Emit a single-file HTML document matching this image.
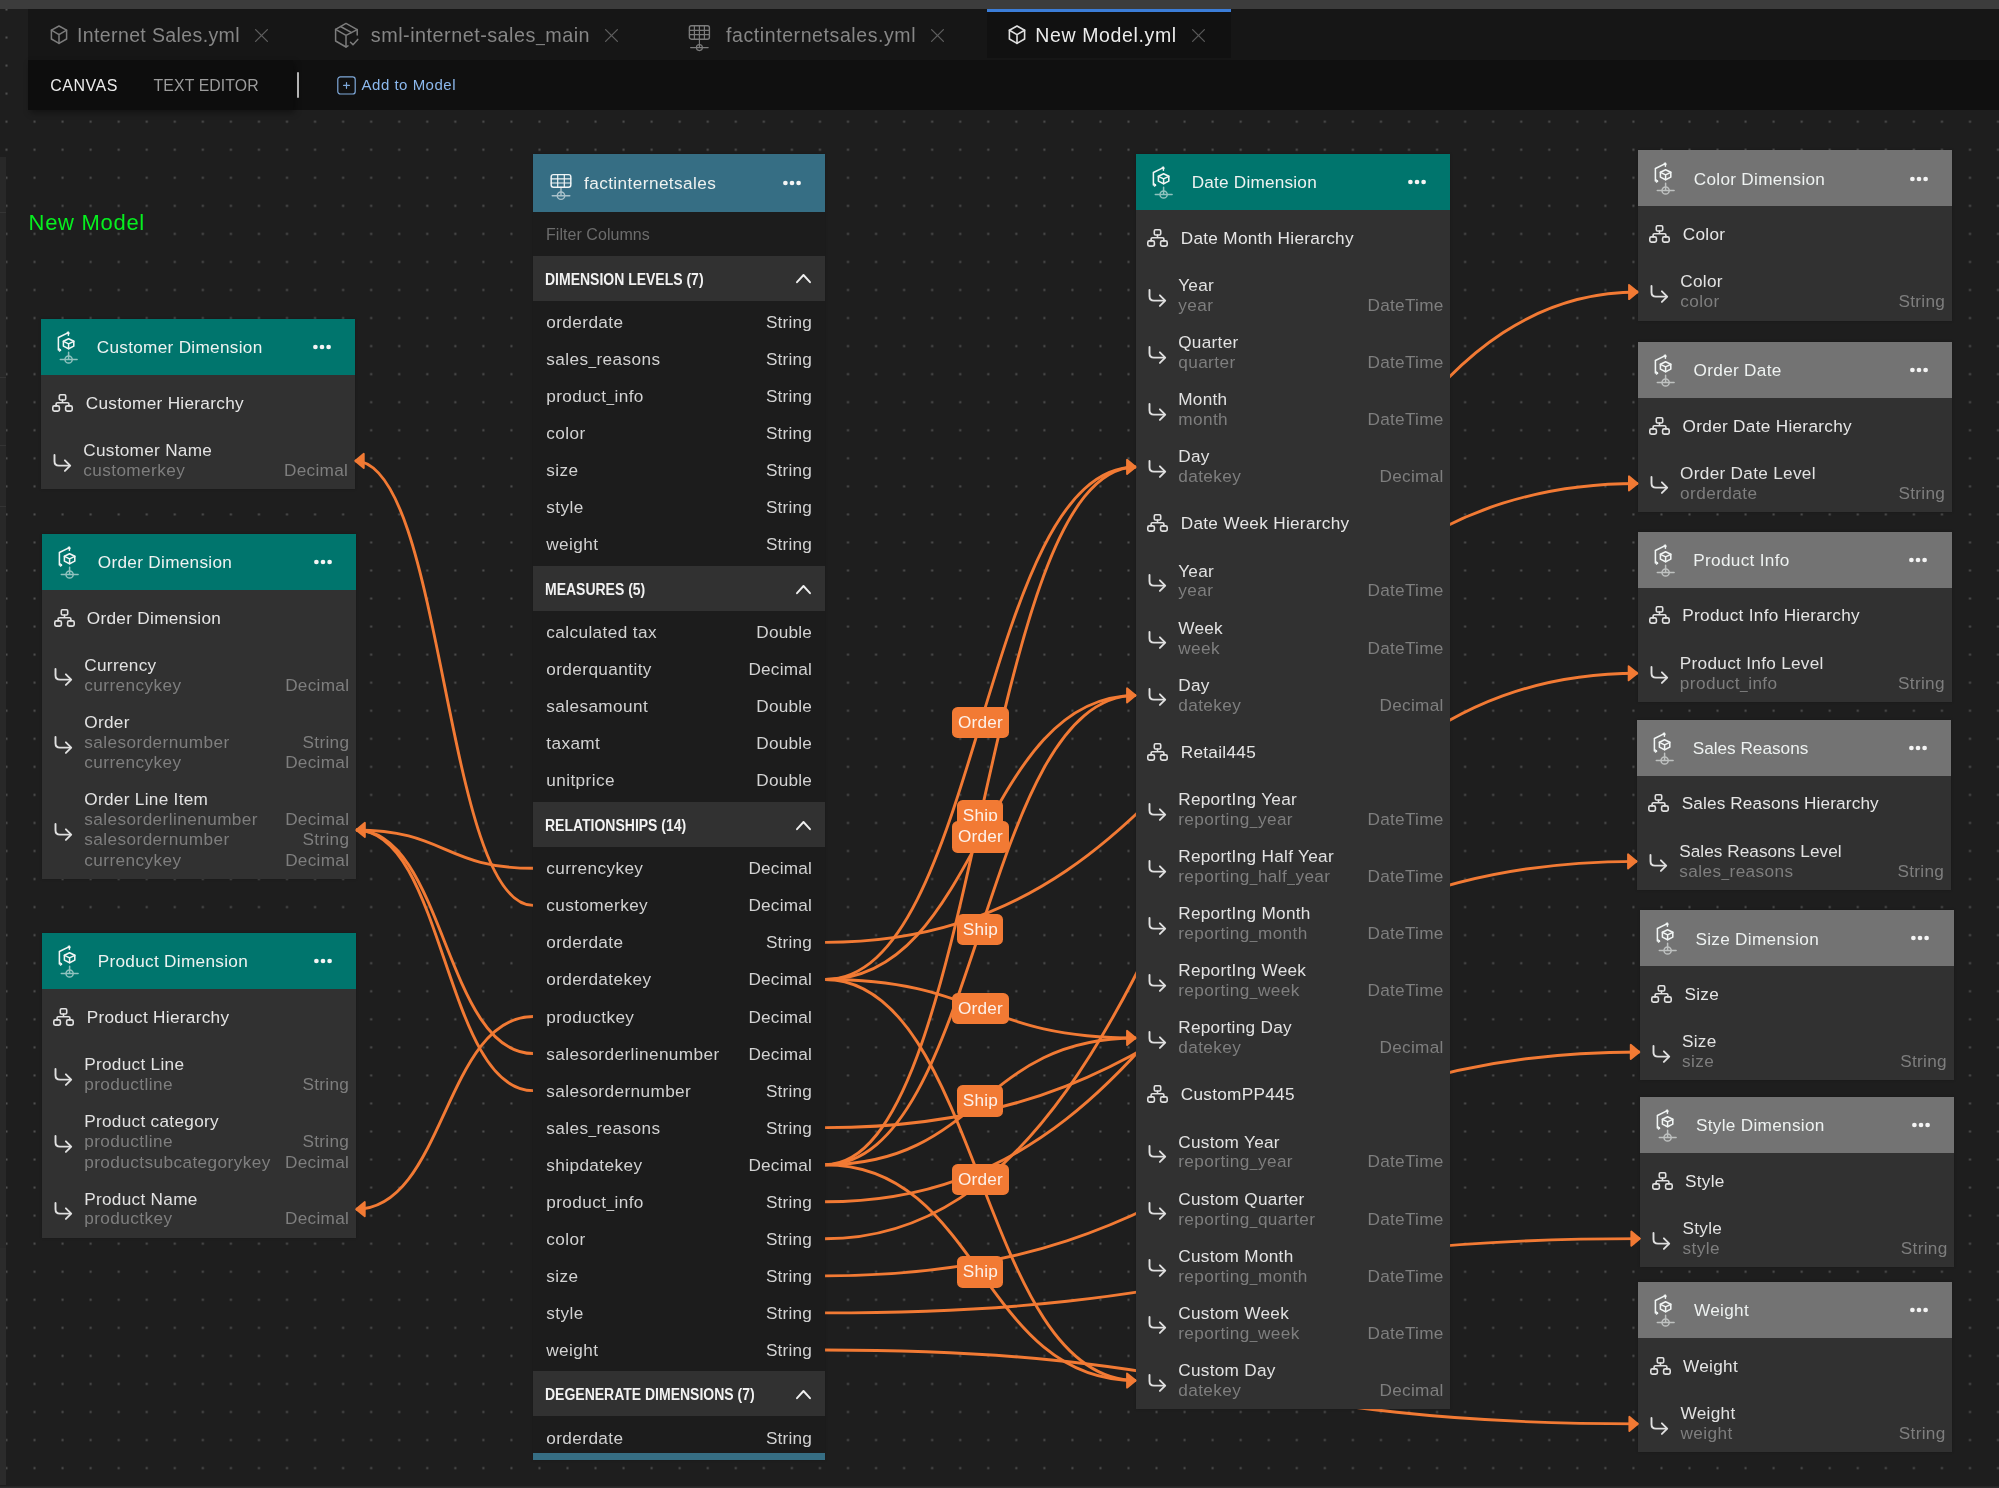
<!DOCTYPE html>
<html lang="en"><head><meta charset="utf-8"><title>New Model.yml</title>
<style>
*{box-sizing:border-box;margin:0;padding:0}
html,body{width:1999px;height:1488px;overflow:hidden;background:#1e1e1e}
body{position:relative;font-family:"Liberation Sans",sans-serif;color:#e4e4e4;-webkit-font-smoothing:antialiased}
.abs{position:absolute}
.t{position:absolute;white-space:nowrap;font-size:17.2px;line-height:20px;height:20px;letter-spacing:.3px}
.r{text-align:right}
.node{position:absolute;background:#313131;box-shadow:0 0 2.5px rgba(0,0,0,.22)}
.hd{position:absolute;left:0;top:0;width:100%;height:56.1px}
.teal{background:#00756d}
.gray{background:#737373}
.blue{background:#366e84}
.ttl{color:#eef2f1}
.hn{color:#e6e6e6}
.ln{color:#e2e2e2}
.sub{color:#7e7e7e;letter-spacing:.42px}
.ty{letter-spacing:.3px}
.u{font-size:80%}
.col{color:#d2d2d2;letter-spacing:.4px}
.cty{letter-spacing:.2px}
.sec{position:absolute;left:0;width:100%;height:45px;background:#313131}
.sec .t{font-weight:bold;font-size:15.6px;color:#f2f2f2;letter-spacing:0;transform:scaleX(.897);transform-origin:0 50%}
#root{position:absolute;left:0;top:0;width:1999px;height:1488px;overflow:hidden;will-change:transform}
svg{position:absolute;overflow:visible}
.ic{fill:none;stroke:#e4e4e4;stroke-linecap:round;stroke-linejoin:round}
</style></head>
<body>
<div id="root">
<svg class="abs" style="left:0;top:0" width="1999" height="1488">
<defs><pattern id="dots" x="-7.525" y="-4.525" width="28.05" height="28.05" patternUnits="userSpaceOnUse"><rect x="13.025" y="13.025" width="2" height="2" fill="#525252"/></pattern></defs>
<rect width="1999" height="1488" fill="url(#dots)"/>
</svg>
<div class="abs" style="left:0;top:157px;width:5.7px;height:1328px;background:#282828"></div>
<div class="abs" style="left:0;top:212px;width:5.7px;height:1.4px;background:#343434"></div>
<div class="abs" style="left:0;top:377px;width:5.7px;height:1.4px;background:#343434"></div>
<div class="abs" style="left:0;top:445px;width:5.7px;height:1.4px;background:#343434"></div>
<div class="abs" style="left:0;top:506px;width:5.7px;height:1.4px;background:#343434"></div>
<div class="abs" style="left:0;top:1248px;width:5.7px;height:237px;background:#2b2b2b"></div>
<div class="abs" style="left:0;top:1486px;width:1999px;height:2px;background:linear-gradient(#232323,#303030)"></div>
<svg class="abs" style="left:0;top:0" width="1999" height="1488"><g fill="none" stroke="#f27a34" stroke-width="2.9" stroke-linecap="butt">
<path d="M533.20 868.32 C444.60 868.32 444.60 829.95 356.00 829.95"/>
<path d="M533.20 905.37 C444.05 905.37 444.05 460.85 354.90 460.85"/>
<path d="M533.20 1016.52 C444.55 1016.52 444.55 1209.20 355.90 1209.20"/>
<path d="M533.20 1053.57 C444.60 1053.57 444.60 829.95 356.00 829.95"/>
<path d="M533.20 1090.62 C444.60 1090.62 444.60 829.95 356.00 829.95"/>
<path d="M825.00 1164.72 C980.45 1164.72 980.45 466.95 1135.90 466.95"/>
<path d="M825.00 1164.72 C980.45 1164.72 980.45 695.35 1135.90 695.35"/>
<path d="M825.00 1164.72 C980.45 1164.72 980.45 1037.95 1135.90 1037.95"/>
<path d="M825.00 1164.72 C980.45 1164.72 980.45 1380.55 1135.90 1380.55"/>
<path d="M825.00 979.47 C980.45 979.47 980.45 466.95 1135.90 466.95"/>
<path d="M825.00 979.47 C980.45 979.47 980.45 695.35 1135.90 695.35"/>
<path d="M825.00 979.47 C980.45 979.47 980.45 1037.95 1135.90 1037.95"/>
<path d="M825.00 979.47 C980.45 979.47 980.45 1380.55 1135.90 1380.55"/>
<path d="M825.00 942.42 C1231.40 942.42 1231.40 483.45 1637.80 483.45"/>
<path d="M825.00 1127.67 C1230.95 1127.67 1230.95 861.35 1636.90 861.35"/>
<path d="M825.00 1201.77 C1231.25 1201.77 1231.25 673.25 1637.50 673.25"/>
<path d="M825.00 1238.82 C1231.45 1238.82 1231.45 292.05 1637.90 292.05"/>
<path d="M825.00 1275.87 C1232.30 1275.87 1232.30 1051.95 1639.60 1051.95"/>
<path d="M825.00 1312.92 C1232.60 1312.92 1232.60 1238.65 1640.20 1238.65"/>
<path d="M825.00 1349.97 C1231.60 1349.97 1231.60 1423.85 1638.20 1423.85"/>
</g></svg>
<div class="node" style="left:40.9px;top:319.1px;width:314.0px;height:170.30px"><div class="hd teal"></div><svg style="left:0px;top:0px" width="50" height="56"><g class="ic" style="stroke:#f1f5f4" stroke-width="1.55"><path d="M19.4 31.1 L17.4 30.9 L17.4 18.5 L27.4 13.6 L27.4 16.2"/><path d="M18.4 29.9 L19.7 31.2 L18.4 32.2" stroke-width="1.2"/><path d="M26.2 13.4 L27.5 13 L28 14.4" stroke-width="1.2"/><path d="M27.6 19.7 L32.8 22.3 L32.8 27.1 L27.6 29.7 L22.4 27.1 L22.4 22.3 Z"/><path d="M22.4 22.3 L27.6 24.9 L32.8 22.3 M27.6 24.9 L27.6 29.7" stroke-width="1.5"/></g><g class="ic" style="stroke:#f1f5f4" stroke-width="1.5" opacity=".6"><path d="M27.6 33.2 L27.6 40.5 M19.3 40.5 L36.1 40.5"/><circle cx="27.6" cy="40.5" r="3.6"/></g></svg><div class="t ttl" style="top:18.40px;left:55.80px;">Customer Dimension</div><svg style="left:270.80px;top:24.30px" width="20" height="8"><circle cx="3.4000000000000004" cy="4" r="2.35" fill="#f4f4f4"/><circle cx="10" cy="4" r="2.35" fill="#f4f4f4"/><circle cx="16.6" cy="4" r="2.35" fill="#f4f4f4"/></svg><svg style="left:11.5px;top:74.9px" width="22" height="19"><g class="ic" stroke-width="1.6" style="stroke:#e2e2e2"><rect x="7.3" y=".8" width="6.4" height="5.2" rx="1.2"/><rect x=".8" y="11.9" width="6.6" height="5.2" rx="1.6"/><rect x="13.6" y="11.9" width="6.6" height="5.2" rx="1.6"/><path d="M10.5 6 L10.5 8.7 M4.1 11.9 L4.1 10 Q4.1 8.7 5.4 8.7 L15.6 8.7 Q16.9 8.7 16.9 10 L16.9 11.9"/></g></svg><div class="t hn" style="top:73.90px;left:44.80px;">Customer Hierarchy</div><svg style="left:0px;top:133.75px" width="34" height="22"><g class="ic" stroke-width="1.9" style="stroke:#e0e0e0"><path d="M13.5 2 L13.5 8.2 Q13.5 12.6 17.9 12.6 L28.6 12.6"/><path d="M23.9 7.3 L29.2 12.6 L23.9 17.9"/></g></svg><div class="t ln" style="top:121.20px;left:42.30px;">Customer Name</div><div class="t sub" style="top:141.05px;left:42.30px;">customerkey</div><div class="t sub r ty" style="top:141.05px;right:6.70px;">Decimal</div></div>
<div class="node" style="left:42.0px;top:533.7px;width:314.0px;height:344.95px"><div class="hd teal"></div><svg style="left:0px;top:0px" width="50" height="56"><g class="ic" style="stroke:#f1f5f4" stroke-width="1.55"><path d="M19.4 31.1 L17.4 30.9 L17.4 18.5 L27.4 13.6 L27.4 16.2"/><path d="M18.4 29.9 L19.7 31.2 L18.4 32.2" stroke-width="1.2"/><path d="M26.2 13.4 L27.5 13 L28 14.4" stroke-width="1.2"/><path d="M27.6 19.7 L32.8 22.3 L32.8 27.1 L27.6 29.7 L22.4 27.1 L22.4 22.3 Z"/><path d="M22.4 22.3 L27.6 24.9 L32.8 22.3 M27.6 24.9 L27.6 29.7" stroke-width="1.5"/></g><g class="ic" style="stroke:#f1f5f4" stroke-width="1.5" opacity=".6"><path d="M27.6 33.2 L27.6 40.5 M19.3 40.5 L36.1 40.5"/><circle cx="27.6" cy="40.5" r="3.6"/></g></svg><div class="t ttl" style="top:18.40px;left:55.80px;">Order Dimension</div><svg style="left:270.80px;top:24.30px" width="20" height="8"><circle cx="3.4000000000000004" cy="4" r="2.35" fill="#f4f4f4"/><circle cx="10" cy="4" r="2.35" fill="#f4f4f4"/><circle cx="16.6" cy="4" r="2.35" fill="#f4f4f4"/></svg><svg style="left:11.5px;top:74.9px" width="22" height="19"><g class="ic" stroke-width="1.6" style="stroke:#e2e2e2"><rect x="7.3" y=".8" width="6.4" height="5.2" rx="1.2"/><rect x=".8" y="11.9" width="6.6" height="5.2" rx="1.6"/><rect x="13.6" y="11.9" width="6.6" height="5.2" rx="1.6"/><path d="M10.5 6 L10.5 8.7 M4.1 11.9 L4.1 10 Q4.1 8.7 5.4 8.7 L15.6 8.7 Q16.9 8.7 16.9 10 L16.9 11.9"/></g></svg><div class="t hn" style="top:73.90px;left:44.80px;">Order Dimension</div><svg style="left:0px;top:133.75px" width="34" height="22"><g class="ic" stroke-width="1.9" style="stroke:#e0e0e0"><path d="M13.5 2 L13.5 8.2 Q13.5 12.6 17.9 12.6 L28.6 12.6"/><path d="M23.9 7.3 L29.2 12.6 L23.9 17.9"/></g></svg><div class="t ln" style="top:121.20px;left:42.30px;">Currency</div><div class="t sub" style="top:141.05px;left:42.30px;">currencykey</div><div class="t sub r ty" style="top:141.05px;right:6.70px;">Decimal</div><svg style="left:0px;top:200.925px" width="34" height="22"><g class="ic" stroke-width="1.9" style="stroke:#e0e0e0"><path d="M13.5 2 L13.5 8.2 Q13.5 12.6 17.9 12.6 L28.6 12.6"/><path d="M23.9 7.3 L29.2 12.6 L23.9 17.9"/></g></svg><div class="t ln" style="top:178.30px;left:42.30px;">Order</div><div class="t sub" style="top:198.15px;left:42.30px;">salesordernumber</div><div class="t sub r ty" style="top:198.15px;right:6.70px;">String</div><div class="t sub" style="top:218.45px;left:42.30px;">currencykey</div><div class="t sub r ty" style="top:218.45px;right:6.70px;">Decimal</div><svg style="left:0px;top:288.25px" width="34" height="22"><g class="ic" stroke-width="1.9" style="stroke:#e0e0e0"><path d="M13.5 2 L13.5 8.2 Q13.5 12.6 17.9 12.6 L28.6 12.6"/><path d="M23.9 7.3 L29.2 12.6 L23.9 17.9"/></g></svg><div class="t ln" style="top:255.55px;left:42.30px;">Order Line Item</div><div class="t sub" style="top:275.40px;left:42.30px;">salesorderlinenumber</div><div class="t sub r ty" style="top:275.40px;right:6.70px;">Decimal</div><div class="t sub" style="top:295.70px;left:42.30px;">salesordernumber</div><div class="t sub r ty" style="top:295.70px;right:6.70px;">String</div><div class="t sub" style="top:316.00px;left:42.30px;">currencykey</div><div class="t sub r ty" style="top:316.00px;right:6.70px;">Decimal</div></div>
<div class="node" style="left:41.9px;top:933.1px;width:314.0px;height:304.65px"><div class="hd teal"></div><svg style="left:0px;top:0px" width="50" height="56"><g class="ic" style="stroke:#f1f5f4" stroke-width="1.55"><path d="M19.4 31.1 L17.4 30.9 L17.4 18.5 L27.4 13.6 L27.4 16.2"/><path d="M18.4 29.9 L19.7 31.2 L18.4 32.2" stroke-width="1.2"/><path d="M26.2 13.4 L27.5 13 L28 14.4" stroke-width="1.2"/><path d="M27.6 19.7 L32.8 22.3 L32.8 27.1 L27.6 29.7 L22.4 27.1 L22.4 22.3 Z"/><path d="M22.4 22.3 L27.6 24.9 L32.8 22.3 M27.6 24.9 L27.6 29.7" stroke-width="1.5"/></g><g class="ic" style="stroke:#f1f5f4" stroke-width="1.5" opacity=".6"><path d="M27.6 33.2 L27.6 40.5 M19.3 40.5 L36.1 40.5"/><circle cx="27.6" cy="40.5" r="3.6"/></g></svg><div class="t ttl" style="top:18.40px;left:55.80px;">Product Dimension</div><svg style="left:270.80px;top:24.30px" width="20" height="8"><circle cx="3.4000000000000004" cy="4" r="2.35" fill="#f4f4f4"/><circle cx="10" cy="4" r="2.35" fill="#f4f4f4"/><circle cx="16.6" cy="4" r="2.35" fill="#f4f4f4"/></svg><svg style="left:11.5px;top:74.9px" width="22" height="19"><g class="ic" stroke-width="1.6" style="stroke:#e2e2e2"><rect x="7.3" y=".8" width="6.4" height="5.2" rx="1.2"/><rect x=".8" y="11.9" width="6.6" height="5.2" rx="1.6"/><rect x="13.6" y="11.9" width="6.6" height="5.2" rx="1.6"/><path d="M10.5 6 L10.5 8.7 M4.1 11.9 L4.1 10 Q4.1 8.7 5.4 8.7 L15.6 8.7 Q16.9 8.7 16.9 10 L16.9 11.9"/></g></svg><div class="t hn" style="top:73.90px;left:44.80px;">Product Hierarchy</div><svg style="left:0px;top:133.75px" width="34" height="22"><g class="ic" stroke-width="1.9" style="stroke:#e0e0e0"><path d="M13.5 2 L13.5 8.2 Q13.5 12.6 17.9 12.6 L28.6 12.6"/><path d="M23.9 7.3 L29.2 12.6 L23.9 17.9"/></g></svg><div class="t ln" style="top:121.20px;left:42.30px;">Product Line</div><div class="t sub" style="top:141.05px;left:42.30px;">productline</div><div class="t sub r ty" style="top:141.05px;right:6.70px;">String</div><svg style="left:0px;top:200.925px" width="34" height="22"><g class="ic" stroke-width="1.9" style="stroke:#e0e0e0"><path d="M13.5 2 L13.5 8.2 Q13.5 12.6 17.9 12.6 L28.6 12.6"/><path d="M23.9 7.3 L29.2 12.6 L23.9 17.9"/></g></svg><div class="t ln" style="top:178.30px;left:42.30px;">Product category</div><div class="t sub" style="top:198.15px;left:42.30px;">productline</div><div class="t sub r ty" style="top:198.15px;right:6.70px;">String</div><div class="t sub" style="top:218.45px;left:42.30px;">productsubcategorykey</div><div class="t sub r ty" style="top:218.45px;right:6.70px;">Decimal</div><svg style="left:0px;top:268.1px" width="34" height="22"><g class="ic" stroke-width="1.9" style="stroke:#e0e0e0"><path d="M13.5 2 L13.5 8.2 Q13.5 12.6 17.9 12.6 L28.6 12.6"/><path d="M23.9 7.3 L29.2 12.6 L23.9 17.9"/></g></svg><div class="t ln" style="top:255.55px;left:42.30px;">Product Name</div><div class="t sub" style="top:275.40px;left:42.30px;">productkey</div><div class="t sub r ty" style="top:275.40px;right:6.70px;">Decimal</div></div>
<div class="node" style="left:1135.9px;top:153.9px;width:314.5px;height:1255.20px"><div class="hd teal"></div><svg style="left:0px;top:0px" width="50" height="56"><g class="ic" style="stroke:#f1f5f4" stroke-width="1.55"><path d="M19.4 31.1 L17.4 30.9 L17.4 18.5 L27.4 13.6 L27.4 16.2"/><path d="M18.4 29.9 L19.7 31.2 L18.4 32.2" stroke-width="1.2"/><path d="M26.2 13.4 L27.5 13 L28 14.4" stroke-width="1.2"/><path d="M27.6 19.7 L32.8 22.3 L32.8 27.1 L27.6 29.7 L22.4 27.1 L22.4 22.3 Z"/><path d="M22.4 22.3 L27.6 24.9 L32.8 22.3 M27.6 24.9 L27.6 29.7" stroke-width="1.5"/></g><g class="ic" style="stroke:#f1f5f4" stroke-width="1.5" opacity=".6"><path d="M27.6 33.2 L27.6 40.5 M19.3 40.5 L36.1 40.5"/><circle cx="27.6" cy="40.5" r="3.6"/></g></svg><div class="t ttl" style="top:18.40px;left:55.80px;letter-spacing:0.21px;">Date Dimension</div><svg style="left:271.30px;top:24.30px" width="20" height="8"><circle cx="3.4000000000000004" cy="4" r="2.35" fill="#f4f4f4"/><circle cx="10" cy="4" r="2.35" fill="#f4f4f4"/><circle cx="16.6" cy="4" r="2.35" fill="#f4f4f4"/></svg><svg style="left:11.5px;top:74.9px" width="22" height="19"><g class="ic" stroke-width="1.6" style="stroke:#e2e2e2"><rect x="7.3" y=".8" width="6.4" height="5.2" rx="1.2"/><rect x=".8" y="11.9" width="6.6" height="5.2" rx="1.6"/><rect x="13.6" y="11.9" width="6.6" height="5.2" rx="1.6"/><path d="M10.5 6 L10.5 8.7 M4.1 11.9 L4.1 10 Q4.1 8.7 5.4 8.7 L15.6 8.7 Q16.9 8.7 16.9 10 L16.9 11.9"/></g></svg><div class="t hn" style="top:73.90px;left:44.80px;">Date Month Hierarchy</div><svg style="left:0px;top:133.75px" width="34" height="22"><g class="ic" stroke-width="1.9" style="stroke:#e0e0e0"><path d="M13.5 2 L13.5 8.2 Q13.5 12.6 17.9 12.6 L28.6 12.6"/><path d="M23.9 7.3 L29.2 12.6 L23.9 17.9"/></g></svg><div class="t ln" style="top:121.20px;left:42.30px;">Year</div><div class="t sub" style="top:141.05px;left:42.30px;">year</div><div class="t sub r ty" style="top:141.05px;right:6.70px;">DateTime</div><svg style="left:0px;top:190.85000000000002px" width="34" height="22"><g class="ic" stroke-width="1.9" style="stroke:#e0e0e0"><path d="M13.5 2 L13.5 8.2 Q13.5 12.6 17.9 12.6 L28.6 12.6"/><path d="M23.9 7.3 L29.2 12.6 L23.9 17.9"/></g></svg><div class="t ln" style="top:178.30px;left:42.30px;">Quarter</div><div class="t sub" style="top:198.15px;left:42.30px;">quarter</div><div class="t sub r ty" style="top:198.15px;right:6.70px;">DateTime</div><svg style="left:0px;top:247.95000000000002px" width="34" height="22"><g class="ic" stroke-width="1.9" style="stroke:#e0e0e0"><path d="M13.5 2 L13.5 8.2 Q13.5 12.6 17.9 12.6 L28.6 12.6"/><path d="M23.9 7.3 L29.2 12.6 L23.9 17.9"/></g></svg><div class="t ln" style="top:235.40px;left:42.30px;">Month</div><div class="t sub" style="top:255.25px;left:42.30px;">month</div><div class="t sub r ty" style="top:255.25px;right:6.70px;">DateTime</div><svg style="left:0px;top:305.05px" width="34" height="22"><g class="ic" stroke-width="1.9" style="stroke:#e0e0e0"><path d="M13.5 2 L13.5 8.2 Q13.5 12.6 17.9 12.6 L28.6 12.6"/><path d="M23.9 7.3 L29.2 12.6 L23.9 17.9"/></g></svg><div class="t ln" style="top:292.50px;left:42.30px;">Day</div><div class="t sub" style="top:312.35px;left:42.30px;">datekey</div><div class="t sub r ty" style="top:312.35px;right:6.70px;">Decimal</div><svg style="left:11.5px;top:360.40000000000003px" width="22" height="19"><g class="ic" stroke-width="1.6" style="stroke:#e2e2e2"><rect x="7.3" y=".8" width="6.4" height="5.2" rx="1.2"/><rect x=".8" y="11.9" width="6.6" height="5.2" rx="1.6"/><rect x="13.6" y="11.9" width="6.6" height="5.2" rx="1.6"/><path d="M10.5 6 L10.5 8.7 M4.1 11.9 L4.1 10 Q4.1 8.7 5.4 8.7 L15.6 8.7 Q16.9 8.7 16.9 10 L16.9 11.9"/></g></svg><div class="t hn" style="top:359.40px;left:44.80px;">Date Week Hierarchy</div><svg style="left:0px;top:419.25000000000006px" width="34" height="22"><g class="ic" stroke-width="1.9" style="stroke:#e0e0e0"><path d="M13.5 2 L13.5 8.2 Q13.5 12.6 17.9 12.6 L28.6 12.6"/><path d="M23.9 7.3 L29.2 12.6 L23.9 17.9"/></g></svg><div class="t ln" style="top:406.70px;left:42.30px;">Year </div><div class="t sub" style="top:426.55px;left:42.30px;">year</div><div class="t sub r ty" style="top:426.55px;right:6.70px;">DateTime</div><svg style="left:0px;top:476.3500000000001px" width="34" height="22"><g class="ic" stroke-width="1.9" style="stroke:#e0e0e0"><path d="M13.5 2 L13.5 8.2 Q13.5 12.6 17.9 12.6 L28.6 12.6"/><path d="M23.9 7.3 L29.2 12.6 L23.9 17.9"/></g></svg><div class="t ln" style="top:463.80px;left:42.30px;">Week</div><div class="t sub" style="top:483.65px;left:42.30px;">week</div><div class="t sub r ty" style="top:483.65px;right:6.70px;">DateTime</div><svg style="left:0px;top:533.45px" width="34" height="22"><g class="ic" stroke-width="1.9" style="stroke:#e0e0e0"><path d="M13.5 2 L13.5 8.2 Q13.5 12.6 17.9 12.6 L28.6 12.6"/><path d="M23.9 7.3 L29.2 12.6 L23.9 17.9"/></g></svg><div class="t ln" style="top:520.90px;left:42.30px;">Day </div><div class="t sub" style="top:540.75px;left:42.30px;">datekey</div><div class="t sub r ty" style="top:540.75px;right:6.70px;">Decimal</div><svg style="left:11.5px;top:588.8000000000001px" width="22" height="19"><g class="ic" stroke-width="1.6" style="stroke:#e2e2e2"><rect x="7.3" y=".8" width="6.4" height="5.2" rx="1.2"/><rect x=".8" y="11.9" width="6.6" height="5.2" rx="1.6"/><rect x="13.6" y="11.9" width="6.6" height="5.2" rx="1.6"/><path d="M10.5 6 L10.5 8.7 M4.1 11.9 L4.1 10 Q4.1 8.7 5.4 8.7 L15.6 8.7 Q16.9 8.7 16.9 10 L16.9 11.9"/></g></svg><div class="t hn" style="top:587.80px;left:44.80px;">Retail445</div><svg style="left:0px;top:647.6500000000001px" width="34" height="22"><g class="ic" stroke-width="1.9" style="stroke:#e0e0e0"><path d="M13.5 2 L13.5 8.2 Q13.5 12.6 17.9 12.6 L28.6 12.6"/><path d="M23.9 7.3 L29.2 12.6 L23.9 17.9"/></g></svg><div class="t ln" style="top:635.10px;left:42.30px;">ReportIng Year</div><div class="t sub" style="top:654.95px;left:42.30px;">reporting<span class="u">_</span>year</div><div class="t sub r ty" style="top:654.95px;right:6.70px;">DateTime</div><svg style="left:0px;top:704.7500000000001px" width="34" height="22"><g class="ic" stroke-width="1.9" style="stroke:#e0e0e0"><path d="M13.5 2 L13.5 8.2 Q13.5 12.6 17.9 12.6 L28.6 12.6"/><path d="M23.9 7.3 L29.2 12.6 L23.9 17.9"/></g></svg><div class="t ln" style="top:692.20px;left:42.30px;">ReportIng Half Year</div><div class="t sub" style="top:712.05px;left:42.30px;">reporting<span class="u">_</span>half<span class="u">_</span>year</div><div class="t sub r ty" style="top:712.05px;right:6.70px;">DateTime</div><svg style="left:0px;top:761.8500000000001px" width="34" height="22"><g class="ic" stroke-width="1.9" style="stroke:#e0e0e0"><path d="M13.5 2 L13.5 8.2 Q13.5 12.6 17.9 12.6 L28.6 12.6"/><path d="M23.9 7.3 L29.2 12.6 L23.9 17.9"/></g></svg><div class="t ln" style="top:749.30px;left:42.30px;">ReportIng Month</div><div class="t sub" style="top:769.15px;left:42.30px;">reporting<span class="u">_</span>month</div><div class="t sub r ty" style="top:769.15px;right:6.70px;">DateTime</div><svg style="left:0px;top:818.9500000000002px" width="34" height="22"><g class="ic" stroke-width="1.9" style="stroke:#e0e0e0"><path d="M13.5 2 L13.5 8.2 Q13.5 12.6 17.9 12.6 L28.6 12.6"/><path d="M23.9 7.3 L29.2 12.6 L23.9 17.9"/></g></svg><div class="t ln" style="top:806.40px;left:42.30px;">ReportIng Week</div><div class="t sub" style="top:826.25px;left:42.30px;">reporting<span class="u">_</span>week</div><div class="t sub r ty" style="top:826.25px;right:6.70px;">DateTime</div><svg style="left:0px;top:876.0500000000002px" width="34" height="22"><g class="ic" stroke-width="1.9" style="stroke:#e0e0e0"><path d="M13.5 2 L13.5 8.2 Q13.5 12.6 17.9 12.6 L28.6 12.6"/><path d="M23.9 7.3 L29.2 12.6 L23.9 17.9"/></g></svg><div class="t ln" style="top:863.50px;left:42.30px;">Reporting Day</div><div class="t sub" style="top:883.35px;left:42.30px;">datekey</div><div class="t sub r ty" style="top:883.35px;right:6.70px;">Decimal</div><svg style="left:11.5px;top:931.4000000000002px" width="22" height="19"><g class="ic" stroke-width="1.6" style="stroke:#e2e2e2"><rect x="7.3" y=".8" width="6.4" height="5.2" rx="1.2"/><rect x=".8" y="11.9" width="6.6" height="5.2" rx="1.6"/><rect x="13.6" y="11.9" width="6.6" height="5.2" rx="1.6"/><path d="M10.5 6 L10.5 8.7 M4.1 11.9 L4.1 10 Q4.1 8.7 5.4 8.7 L15.6 8.7 Q16.9 8.7 16.9 10 L16.9 11.9"/></g></svg><div class="t hn" style="top:930.40px;left:44.80px;">CustomPP445</div><svg style="left:0px;top:990.2500000000002px" width="34" height="22"><g class="ic" stroke-width="1.9" style="stroke:#e0e0e0"><path d="M13.5 2 L13.5 8.2 Q13.5 12.6 17.9 12.6 L28.6 12.6"/><path d="M23.9 7.3 L29.2 12.6 L23.9 17.9"/></g></svg><div class="t ln" style="top:977.70px;left:42.30px;">Custom Year</div><div class="t sub" style="top:997.55px;left:42.30px;">reporting<span class="u">_</span>year</div><div class="t sub r ty" style="top:997.55px;right:6.70px;">DateTime</div><svg style="left:0px;top:1047.3500000000001px" width="34" height="22"><g class="ic" stroke-width="1.9" style="stroke:#e0e0e0"><path d="M13.5 2 L13.5 8.2 Q13.5 12.6 17.9 12.6 L28.6 12.6"/><path d="M23.9 7.3 L29.2 12.6 L23.9 17.9"/></g></svg><div class="t ln" style="top:1034.80px;left:42.30px;">Custom Quarter</div><div class="t sub" style="top:1054.65px;left:42.30px;">reporting<span class="u">_</span>quarter</div><div class="t sub r ty" style="top:1054.65px;right:6.70px;">DateTime</div><svg style="left:0px;top:1104.45px" width="34" height="22"><g class="ic" stroke-width="1.9" style="stroke:#e0e0e0"><path d="M13.5 2 L13.5 8.2 Q13.5 12.6 17.9 12.6 L28.6 12.6"/><path d="M23.9 7.3 L29.2 12.6 L23.9 17.9"/></g></svg><div class="t ln" style="top:1091.90px;left:42.30px;">Custom Month</div><div class="t sub" style="top:1111.75px;left:42.30px;">reporting<span class="u">_</span>month</div><div class="t sub r ty" style="top:1111.75px;right:6.70px;">DateTime</div><svg style="left:0px;top:1161.55px" width="34" height="22"><g class="ic" stroke-width="1.9" style="stroke:#e0e0e0"><path d="M13.5 2 L13.5 8.2 Q13.5 12.6 17.9 12.6 L28.6 12.6"/><path d="M23.9 7.3 L29.2 12.6 L23.9 17.9"/></g></svg><div class="t ln" style="top:1149.00px;left:42.30px;">Custom Week</div><div class="t sub" style="top:1168.85px;left:42.30px;">reporting<span class="u">_</span>week</div><div class="t sub r ty" style="top:1168.85px;right:6.70px;">DateTime</div><svg style="left:0px;top:1218.6499999999999px" width="34" height="22"><g class="ic" stroke-width="1.9" style="stroke:#e0e0e0"><path d="M13.5 2 L13.5 8.2 Q13.5 12.6 17.9 12.6 L28.6 12.6"/><path d="M23.9 7.3 L29.2 12.6 L23.9 17.9"/></g></svg><div class="t ln" style="top:1206.10px;left:42.30px;">Custom Day</div><div class="t sub" style="top:1225.95px;left:42.30px;">datekey</div><div class="t sub r ty" style="top:1225.95px;right:6.70px;">Decimal</div></div>
<div class="node" style="left:1637.9px;top:150.3px;width:314.0px;height:170.30px"><div class="hd gray"></div><svg style="left:0px;top:0px" width="50" height="56"><g class="ic" style="stroke:#f1f5f4" stroke-width="1.55"><path d="M19.4 31.1 L17.4 30.9 L17.4 18.5 L27.4 13.6 L27.4 16.2"/><path d="M18.4 29.9 L19.7 31.2 L18.4 32.2" stroke-width="1.2"/><path d="M26.2 13.4 L27.5 13 L28 14.4" stroke-width="1.2"/><path d="M27.6 19.7 L32.8 22.3 L32.8 27.1 L27.6 29.7 L22.4 27.1 L22.4 22.3 Z"/><path d="M22.4 22.3 L27.6 24.9 L32.8 22.3 M27.6 24.9 L27.6 29.7" stroke-width="1.5"/></g><g class="ic" style="stroke:#f1f5f4" stroke-width="1.5" opacity=".6"><path d="M27.6 33.2 L27.6 40.5 M19.3 40.5 L36.1 40.5"/><circle cx="27.6" cy="40.5" r="3.6"/></g></svg><div class="t ttl" style="top:18.40px;left:55.80px;">Color Dimension</div><svg style="left:270.80px;top:24.30px" width="20" height="8"><circle cx="3.4000000000000004" cy="4" r="2.35" fill="#f4f4f4"/><circle cx="10" cy="4" r="2.35" fill="#f4f4f4"/><circle cx="16.6" cy="4" r="2.35" fill="#f4f4f4"/></svg><svg style="left:11.5px;top:74.9px" width="22" height="19"><g class="ic" stroke-width="1.6" style="stroke:#e2e2e2"><rect x="7.3" y=".8" width="6.4" height="5.2" rx="1.2"/><rect x=".8" y="11.9" width="6.6" height="5.2" rx="1.6"/><rect x="13.6" y="11.9" width="6.6" height="5.2" rx="1.6"/><path d="M10.5 6 L10.5 8.7 M4.1 11.9 L4.1 10 Q4.1 8.7 5.4 8.7 L15.6 8.7 Q16.9 8.7 16.9 10 L16.9 11.9"/></g></svg><div class="t hn" style="top:73.90px;left:44.80px;">Color</div><svg style="left:0px;top:133.75px" width="34" height="22"><g class="ic" stroke-width="1.9" style="stroke:#e0e0e0"><path d="M13.5 2 L13.5 8.2 Q13.5 12.6 17.9 12.6 L28.6 12.6"/><path d="M23.9 7.3 L29.2 12.6 L23.9 17.9"/></g></svg><div class="t ln" style="top:121.20px;left:42.30px;">Color</div><div class="t sub" style="top:141.05px;left:42.30px;">color</div><div class="t sub r ty" style="top:141.05px;right:6.70px;">String</div></div>
<div class="node" style="left:1637.8px;top:341.7px;width:314.0px;height:170.30px"><div class="hd gray"></div><svg style="left:0px;top:0px" width="50" height="56"><g class="ic" style="stroke:#f1f5f4" stroke-width="1.55"><path d="M19.4 31.1 L17.4 30.9 L17.4 18.5 L27.4 13.6 L27.4 16.2"/><path d="M18.4 29.9 L19.7 31.2 L18.4 32.2" stroke-width="1.2"/><path d="M26.2 13.4 L27.5 13 L28 14.4" stroke-width="1.2"/><path d="M27.6 19.7 L32.8 22.3 L32.8 27.1 L27.6 29.7 L22.4 27.1 L22.4 22.3 Z"/><path d="M22.4 22.3 L27.6 24.9 L32.8 22.3 M27.6 24.9 L27.6 29.7" stroke-width="1.5"/></g><g class="ic" style="stroke:#f1f5f4" stroke-width="1.5" opacity=".6"><path d="M27.6 33.2 L27.6 40.5 M19.3 40.5 L36.1 40.5"/><circle cx="27.6" cy="40.5" r="3.6"/></g></svg><div class="t ttl" style="top:18.40px;left:55.80px;">Order Date</div><svg style="left:270.80px;top:24.30px" width="20" height="8"><circle cx="3.4000000000000004" cy="4" r="2.35" fill="#f4f4f4"/><circle cx="10" cy="4" r="2.35" fill="#f4f4f4"/><circle cx="16.6" cy="4" r="2.35" fill="#f4f4f4"/></svg><svg style="left:11.5px;top:74.9px" width="22" height="19"><g class="ic" stroke-width="1.6" style="stroke:#e2e2e2"><rect x="7.3" y=".8" width="6.4" height="5.2" rx="1.2"/><rect x=".8" y="11.9" width="6.6" height="5.2" rx="1.6"/><rect x="13.6" y="11.9" width="6.6" height="5.2" rx="1.6"/><path d="M10.5 6 L10.5 8.7 M4.1 11.9 L4.1 10 Q4.1 8.7 5.4 8.7 L15.6 8.7 Q16.9 8.7 16.9 10 L16.9 11.9"/></g></svg><div class="t hn" style="top:73.90px;left:44.80px;">Order Date Hierarchy</div><svg style="left:0px;top:133.75px" width="34" height="22"><g class="ic" stroke-width="1.9" style="stroke:#e0e0e0"><path d="M13.5 2 L13.5 8.2 Q13.5 12.6 17.9 12.6 L28.6 12.6"/><path d="M23.9 7.3 L29.2 12.6 L23.9 17.9"/></g></svg><div class="t ln" style="top:121.20px;left:42.30px;">Order Date Level</div><div class="t sub" style="top:141.05px;left:42.30px;">orderdate</div><div class="t sub r ty" style="top:141.05px;right:6.70px;">String</div></div>
<div class="node" style="left:1637.5px;top:531.5px;width:314.0px;height:170.30px"><div class="hd gray"></div><svg style="left:0px;top:0px" width="50" height="56"><g class="ic" style="stroke:#f1f5f4" stroke-width="1.55"><path d="M19.4 31.1 L17.4 30.9 L17.4 18.5 L27.4 13.6 L27.4 16.2"/><path d="M18.4 29.9 L19.7 31.2 L18.4 32.2" stroke-width="1.2"/><path d="M26.2 13.4 L27.5 13 L28 14.4" stroke-width="1.2"/><path d="M27.6 19.7 L32.8 22.3 L32.8 27.1 L27.6 29.7 L22.4 27.1 L22.4 22.3 Z"/><path d="M22.4 22.3 L27.6 24.9 L32.8 22.3 M27.6 24.9 L27.6 29.7" stroke-width="1.5"/></g><g class="ic" style="stroke:#f1f5f4" stroke-width="1.5" opacity=".6"><path d="M27.6 33.2 L27.6 40.5 M19.3 40.5 L36.1 40.5"/><circle cx="27.6" cy="40.5" r="3.6"/></g></svg><div class="t ttl" style="top:18.40px;left:55.80px;">Product Info</div><svg style="left:270.80px;top:24.30px" width="20" height="8"><circle cx="3.4000000000000004" cy="4" r="2.35" fill="#f4f4f4"/><circle cx="10" cy="4" r="2.35" fill="#f4f4f4"/><circle cx="16.6" cy="4" r="2.35" fill="#f4f4f4"/></svg><svg style="left:11.5px;top:74.9px" width="22" height="19"><g class="ic" stroke-width="1.6" style="stroke:#e2e2e2"><rect x="7.3" y=".8" width="6.4" height="5.2" rx="1.2"/><rect x=".8" y="11.9" width="6.6" height="5.2" rx="1.6"/><rect x="13.6" y="11.9" width="6.6" height="5.2" rx="1.6"/><path d="M10.5 6 L10.5 8.7 M4.1 11.9 L4.1 10 Q4.1 8.7 5.4 8.7 L15.6 8.7 Q16.9 8.7 16.9 10 L16.9 11.9"/></g></svg><div class="t hn" style="top:73.90px;left:44.80px;">Product Info Hierarchy</div><svg style="left:0px;top:133.75px" width="34" height="22"><g class="ic" stroke-width="1.9" style="stroke:#e0e0e0"><path d="M13.5 2 L13.5 8.2 Q13.5 12.6 17.9 12.6 L28.6 12.6"/><path d="M23.9 7.3 L29.2 12.6 L23.9 17.9"/></g></svg><div class="t ln" style="top:121.20px;left:42.30px;">Product Info Level</div><div class="t sub" style="top:141.05px;left:42.30px;">product<span class="u">_</span>info</div><div class="t sub r ty" style="top:141.05px;right:6.70px;">String</div></div>
<div class="node" style="left:1636.9px;top:719.6px;width:314.0px;height:170.30px"><div class="hd gray"></div><svg style="left:0px;top:0px" width="50" height="56"><g class="ic" style="stroke:#f1f5f4" stroke-width="1.55"><path d="M19.4 31.1 L17.4 30.9 L17.4 18.5 L27.4 13.6 L27.4 16.2"/><path d="M18.4 29.9 L19.7 31.2 L18.4 32.2" stroke-width="1.2"/><path d="M26.2 13.4 L27.5 13 L28 14.4" stroke-width="1.2"/><path d="M27.6 19.7 L32.8 22.3 L32.8 27.1 L27.6 29.7 L22.4 27.1 L22.4 22.3 Z"/><path d="M22.4 22.3 L27.6 24.9 L32.8 22.3 M27.6 24.9 L27.6 29.7" stroke-width="1.5"/></g><g class="ic" style="stroke:#f1f5f4" stroke-width="1.5" opacity=".6"><path d="M27.6 33.2 L27.6 40.5 M19.3 40.5 L36.1 40.5"/><circle cx="27.6" cy="40.5" r="3.6"/></g></svg><div class="t ttl" style="top:18.40px;left:55.80px;letter-spacing:0.0px;">Sales Reasons</div><svg style="left:270.80px;top:24.30px" width="20" height="8"><circle cx="3.4000000000000004" cy="4" r="2.35" fill="#f4f4f4"/><circle cx="10" cy="4" r="2.35" fill="#f4f4f4"/><circle cx="16.6" cy="4" r="2.35" fill="#f4f4f4"/></svg><svg style="left:11.5px;top:74.9px" width="22" height="19"><g class="ic" stroke-width="1.6" style="stroke:#e2e2e2"><rect x="7.3" y=".8" width="6.4" height="5.2" rx="1.2"/><rect x=".8" y="11.9" width="6.6" height="5.2" rx="1.6"/><rect x="13.6" y="11.9" width="6.6" height="5.2" rx="1.6"/><path d="M10.5 6 L10.5 8.7 M4.1 11.9 L4.1 10 Q4.1 8.7 5.4 8.7 L15.6 8.7 Q16.9 8.7 16.9 10 L16.9 11.9"/></g></svg><div class="t hn" style="top:73.90px;left:44.80px;letter-spacing:0.14px;">Sales Reasons Hierarchy</div><svg style="left:0px;top:133.75px" width="34" height="22"><g class="ic" stroke-width="1.9" style="stroke:#e0e0e0"><path d="M13.5 2 L13.5 8.2 Q13.5 12.6 17.9 12.6 L28.6 12.6"/><path d="M23.9 7.3 L29.2 12.6 L23.9 17.9"/></g></svg><div class="t ln" style="top:121.20px;left:42.30px;letter-spacing:0.05px;">Sales Reasons Level</div><div class="t sub" style="top:141.05px;left:42.30px;">sales<span class="u">_</span>reasons</div><div class="t sub r ty" style="top:141.05px;right:6.70px;">String</div></div>
<div class="node" style="left:1639.6px;top:910.2px;width:314.0px;height:170.30px"><div class="hd gray"></div><svg style="left:0px;top:0px" width="50" height="56"><g class="ic" style="stroke:#f1f5f4" stroke-width="1.55"><path d="M19.4 31.1 L17.4 30.9 L17.4 18.5 L27.4 13.6 L27.4 16.2"/><path d="M18.4 29.9 L19.7 31.2 L18.4 32.2" stroke-width="1.2"/><path d="M26.2 13.4 L27.5 13 L28 14.4" stroke-width="1.2"/><path d="M27.6 19.7 L32.8 22.3 L32.8 27.1 L27.6 29.7 L22.4 27.1 L22.4 22.3 Z"/><path d="M22.4 22.3 L27.6 24.9 L32.8 22.3 M27.6 24.9 L27.6 29.7" stroke-width="1.5"/></g><g class="ic" style="stroke:#f1f5f4" stroke-width="1.5" opacity=".6"><path d="M27.6 33.2 L27.6 40.5 M19.3 40.5 L36.1 40.5"/><circle cx="27.6" cy="40.5" r="3.6"/></g></svg><div class="t ttl" style="top:18.40px;left:55.80px;">Size Dimension</div><svg style="left:270.80px;top:24.30px" width="20" height="8"><circle cx="3.4000000000000004" cy="4" r="2.35" fill="#f4f4f4"/><circle cx="10" cy="4" r="2.35" fill="#f4f4f4"/><circle cx="16.6" cy="4" r="2.35" fill="#f4f4f4"/></svg><svg style="left:11.5px;top:74.9px" width="22" height="19"><g class="ic" stroke-width="1.6" style="stroke:#e2e2e2"><rect x="7.3" y=".8" width="6.4" height="5.2" rx="1.2"/><rect x=".8" y="11.9" width="6.6" height="5.2" rx="1.6"/><rect x="13.6" y="11.9" width="6.6" height="5.2" rx="1.6"/><path d="M10.5 6 L10.5 8.7 M4.1 11.9 L4.1 10 Q4.1 8.7 5.4 8.7 L15.6 8.7 Q16.9 8.7 16.9 10 L16.9 11.9"/></g></svg><div class="t hn" style="top:73.90px;left:44.80px;">Size</div><svg style="left:0px;top:133.75px" width="34" height="22"><g class="ic" stroke-width="1.9" style="stroke:#e0e0e0"><path d="M13.5 2 L13.5 8.2 Q13.5 12.6 17.9 12.6 L28.6 12.6"/><path d="M23.9 7.3 L29.2 12.6 L23.9 17.9"/></g></svg><div class="t ln" style="top:121.20px;left:42.30px;">Size</div><div class="t sub" style="top:141.05px;left:42.30px;">size</div><div class="t sub r ty" style="top:141.05px;right:6.70px;">String</div></div>
<div class="node" style="left:1640.2px;top:1096.9px;width:314.0px;height:170.30px"><div class="hd gray"></div><svg style="left:0px;top:0px" width="50" height="56"><g class="ic" style="stroke:#f1f5f4" stroke-width="1.55"><path d="M19.4 31.1 L17.4 30.9 L17.4 18.5 L27.4 13.6 L27.4 16.2"/><path d="M18.4 29.9 L19.7 31.2 L18.4 32.2" stroke-width="1.2"/><path d="M26.2 13.4 L27.5 13 L28 14.4" stroke-width="1.2"/><path d="M27.6 19.7 L32.8 22.3 L32.8 27.1 L27.6 29.7 L22.4 27.1 L22.4 22.3 Z"/><path d="M22.4 22.3 L27.6 24.9 L32.8 22.3 M27.6 24.9 L27.6 29.7" stroke-width="1.5"/></g><g class="ic" style="stroke:#f1f5f4" stroke-width="1.5" opacity=".6"><path d="M27.6 33.2 L27.6 40.5 M19.3 40.5 L36.1 40.5"/><circle cx="27.6" cy="40.5" r="3.6"/></g></svg><div class="t ttl" style="top:18.40px;left:55.80px;">Style Dimension</div><svg style="left:270.80px;top:24.30px" width="20" height="8"><circle cx="3.4000000000000004" cy="4" r="2.35" fill="#f4f4f4"/><circle cx="10" cy="4" r="2.35" fill="#f4f4f4"/><circle cx="16.6" cy="4" r="2.35" fill="#f4f4f4"/></svg><svg style="left:11.5px;top:74.9px" width="22" height="19"><g class="ic" stroke-width="1.6" style="stroke:#e2e2e2"><rect x="7.3" y=".8" width="6.4" height="5.2" rx="1.2"/><rect x=".8" y="11.9" width="6.6" height="5.2" rx="1.6"/><rect x="13.6" y="11.9" width="6.6" height="5.2" rx="1.6"/><path d="M10.5 6 L10.5 8.7 M4.1 11.9 L4.1 10 Q4.1 8.7 5.4 8.7 L15.6 8.7 Q16.9 8.7 16.9 10 L16.9 11.9"/></g></svg><div class="t hn" style="top:73.90px;left:44.80px;">Style</div><svg style="left:0px;top:133.75px" width="34" height="22"><g class="ic" stroke-width="1.9" style="stroke:#e0e0e0"><path d="M13.5 2 L13.5 8.2 Q13.5 12.6 17.9 12.6 L28.6 12.6"/><path d="M23.9 7.3 L29.2 12.6 L23.9 17.9"/></g></svg><div class="t ln" style="top:121.20px;left:42.30px;">Style</div><div class="t sub" style="top:141.05px;left:42.30px;">style</div><div class="t sub r ty" style="top:141.05px;right:6.70px;">String</div></div>
<div class="node" style="left:1638.2px;top:1282.1px;width:314.0px;height:170.30px"><div class="hd gray"></div><svg style="left:0px;top:0px" width="50" height="56"><g class="ic" style="stroke:#f1f5f4" stroke-width="1.55"><path d="M19.4 31.1 L17.4 30.9 L17.4 18.5 L27.4 13.6 L27.4 16.2"/><path d="M18.4 29.9 L19.7 31.2 L18.4 32.2" stroke-width="1.2"/><path d="M26.2 13.4 L27.5 13 L28 14.4" stroke-width="1.2"/><path d="M27.6 19.7 L32.8 22.3 L32.8 27.1 L27.6 29.7 L22.4 27.1 L22.4 22.3 Z"/><path d="M22.4 22.3 L27.6 24.9 L32.8 22.3 M27.6 24.9 L27.6 29.7" stroke-width="1.5"/></g><g class="ic" style="stroke:#f1f5f4" stroke-width="1.5" opacity=".6"><path d="M27.6 33.2 L27.6 40.5 M19.3 40.5 L36.1 40.5"/><circle cx="27.6" cy="40.5" r="3.6"/></g></svg><div class="t ttl" style="top:18.40px;left:55.80px;">Weight</div><svg style="left:270.80px;top:24.30px" width="20" height="8"><circle cx="3.4000000000000004" cy="4" r="2.35" fill="#f4f4f4"/><circle cx="10" cy="4" r="2.35" fill="#f4f4f4"/><circle cx="16.6" cy="4" r="2.35" fill="#f4f4f4"/></svg><svg style="left:11.5px;top:74.9px" width="22" height="19"><g class="ic" stroke-width="1.6" style="stroke:#e2e2e2"><rect x="7.3" y=".8" width="6.4" height="5.2" rx="1.2"/><rect x=".8" y="11.9" width="6.6" height="5.2" rx="1.6"/><rect x="13.6" y="11.9" width="6.6" height="5.2" rx="1.6"/><path d="M10.5 6 L10.5 8.7 M4.1 11.9 L4.1 10 Q4.1 8.7 5.4 8.7 L15.6 8.7 Q16.9 8.7 16.9 10 L16.9 11.9"/></g></svg><div class="t hn" style="top:73.90px;left:44.80px;">Weight</div><svg style="left:0px;top:133.75px" width="34" height="22"><g class="ic" stroke-width="1.9" style="stroke:#e0e0e0"><path d="M13.5 2 L13.5 8.2 Q13.5 12.6 17.9 12.6 L28.6 12.6"/><path d="M23.9 7.3 L29.2 12.6 L23.9 17.9"/></g></svg><div class="t ln" style="top:121.20px;left:42.30px;">Weight</div><div class="t sub" style="top:141.05px;left:42.30px;">weight</div><div class="t sub r ty" style="top:141.05px;right:6.70px;">String</div></div>
<div class="node" style="left:533.2px;top:153.9px;width:291.8px;height:1305.90px;background:#1c1c1c;overflow:hidden"><div class="hd blue" style="height:58px"></div><svg style="left:0;top:0" width="50" height="58"><g class="ic" style="stroke:#f1f5f6" stroke-width="1.45"><rect x="18.2" y="20.6" width="19.6" height="12.6" rx="2.2"/><path d="M24.7 20.6 V33.2 M31.3 20.6 V33.2 M18.2 24.8 H37.8 M18.2 29 H37.8" stroke-width="1.2"/></g><g class="ic" style="stroke:#f1f5f6" stroke-width="1.4" opacity=".62"><path d="M28 33.2 V41.7 M19.2 41.7 H36.8"/><circle cx="28" cy="41.7" r="3.7"/></g></svg><div class="t ttl" style="top:19.20px;left:50.80px;letter-spacing:0.42px;">factinternetsales</div><svg style="left:248.50px;top:24.80px" width="20" height="8"><circle cx="3.4000000000000004" cy="4" r="2.35" fill="#f4f4f4"/><circle cx="10" cy="4" r="2.35" fill="#f4f4f4"/><circle cx="16.6" cy="4" r="2.35" fill="#f4f4f4"/></svg><div class="t " style="top:71.40px;left:12.80px;font-size:16px;letter-spacing:0.05px;color:#6c6c6c;">Filter Columns</div><div class="sec" style="top:101.80px"><div class="t " style="top:13.90px;left:11.50px;">DIMENSION LEVELS (7)</div><svg style="left:262.2px;top:17.8px" width="17" height="11"><path class="ic" style="stroke:#f0f0f0" stroke-width="1.9" d="M2 9.2 L8.5 2 L15 9.2"/></svg></div><div class="t col" style="top:158.22px;left:13.10px;">orderdate</div><div class="t col r cty" style="top:158.22px;right:13.00px;">String</div><div class="t col" style="top:195.28px;left:13.10px;">sales<span class="u">_</span>reasons</div><div class="t col r cty" style="top:195.28px;right:13.00px;">String</div><div class="t col" style="top:232.33px;left:13.10px;">product<span class="u">_</span>info</div><div class="t col r cty" style="top:232.33px;right:13.00px;">String</div><div class="t col" style="top:269.38px;left:13.10px;">color</div><div class="t col r cty" style="top:269.38px;right:13.00px;">String</div><div class="t col" style="top:306.43px;left:13.10px;">size</div><div class="t col r cty" style="top:306.43px;right:13.00px;">String</div><div class="t col" style="top:343.48px;left:13.10px;">style</div><div class="t col r cty" style="top:343.48px;right:13.00px;">String</div><div class="t col" style="top:380.53px;left:13.10px;">weight</div><div class="t col r cty" style="top:380.53px;right:13.00px;">String</div><div class="sec" style="top:411.95px"><div class="t " style="top:13.90px;left:11.50px;">MEASURES (5)</div><svg style="left:262.2px;top:17.8px" width="17" height="11"><path class="ic" style="stroke:#f0f0f0" stroke-width="1.9" d="M2 9.2 L8.5 2 L15 9.2"/></svg></div><div class="t col" style="top:468.38px;left:13.10px;">calculated tax</div><div class="t col r cty" style="top:468.38px;right:13.00px;">Double</div><div class="t col" style="top:505.43px;left:13.10px;">orderquantity</div><div class="t col r cty" style="top:505.43px;right:13.00px;">Decimal</div><div class="t col" style="top:542.48px;left:13.10px;">salesamount</div><div class="t col r cty" style="top:542.48px;right:13.00px;">Double</div><div class="t col" style="top:579.52px;left:13.10px;">taxamt</div><div class="t col r cty" style="top:579.52px;right:13.00px;">Double</div><div class="t col" style="top:616.57px;left:13.10px;">unitprice</div><div class="t col r cty" style="top:616.57px;right:13.00px;">Double</div><div class="sec" style="top:648.00px"><div class="t " style="top:13.90px;left:11.50px;">RELATIONSHIPS (14)</div><svg style="left:262.2px;top:17.8px" width="17" height="11"><path class="ic" style="stroke:#f0f0f0" stroke-width="1.9" d="M2 9.2 L8.5 2 L15 9.2"/></svg></div><div class="t col" style="top:704.42px;left:13.10px;">currencykey</div><div class="t col r cty" style="top:704.42px;right:13.00px;">Decimal</div><div class="t col" style="top:741.47px;left:13.10px;">customerkey</div><div class="t col r cty" style="top:741.47px;right:13.00px;">Decimal</div><div class="t col" style="top:778.52px;left:13.10px;">orderdate</div><div class="t col r cty" style="top:778.52px;right:13.00px;">String</div><div class="t col" style="top:815.57px;left:13.10px;">orderdatekey</div><div class="t col r cty" style="top:815.57px;right:13.00px;">Decimal</div><div class="t col" style="top:852.62px;left:13.10px;">productkey</div><div class="t col r cty" style="top:852.62px;right:13.00px;">Decimal</div><div class="t col" style="top:889.67px;left:13.10px;">salesorderlinenumber</div><div class="t col r cty" style="top:889.67px;right:13.00px;">Decimal</div><div class="t col" style="top:926.72px;left:13.10px;">salesordernumber</div><div class="t col r cty" style="top:926.72px;right:13.00px;">String</div><div class="t col" style="top:963.77px;left:13.10px;">sales<span class="u">_</span>reasons</div><div class="t col r cty" style="top:963.77px;right:13.00px;">String</div><div class="t col" style="top:1000.82px;left:13.10px;">shipdatekey</div><div class="t col r cty" style="top:1000.82px;right:13.00px;">Decimal</div><div class="t col" style="top:1037.87px;left:13.10px;">product<span class="u">_</span>info</div><div class="t col r cty" style="top:1037.87px;right:13.00px;">String</div><div class="t col" style="top:1074.92px;left:13.10px;">color</div><div class="t col r cty" style="top:1074.92px;right:13.00px;">String</div><div class="t col" style="top:1111.97px;left:13.10px;">size</div><div class="t col r cty" style="top:1111.97px;right:13.00px;">String</div><div class="t col" style="top:1149.02px;left:13.10px;">style</div><div class="t col r cty" style="top:1149.02px;right:13.00px;">String</div><div class="t col" style="top:1186.07px;left:13.10px;">weight</div><div class="t col r cty" style="top:1186.07px;right:13.00px;">String</div><div class="sec" style="top:1217.50px"><div class="t " style="top:13.90px;left:11.50px;">DEGENERATE DIMENSIONS (7)</div><svg style="left:262.2px;top:17.8px" width="17" height="11"><path class="ic" style="stroke:#f0f0f0" stroke-width="1.9" d="M2 9.2 L8.5 2 L15 9.2"/></svg></div><div class="t col" style="top:1273.92px;left:13.10px;">orderdate</div><div class="t col r cty" style="top:1273.92px;right:13.00px;">String</div><div class="abs" style="left:0;bottom:0;width:100%;height:7px;background:#366e84"></div></div>
<svg class="abs" style="left:0;top:0" width="1999" height="1488"><g fill="#f27a34" stroke="#f27a34" stroke-width="1.8" stroke-linejoin="round">
<path d="M356.20 829.95 L364.90 822.80 L364.90 837.10 Z"/>
<path d="M355.10 460.85 L363.80 453.70 L363.80 468.00 Z"/>
<path d="M356.10 1209.20 L364.80 1202.05 L364.80 1216.35 Z"/>
<path d="M1135.70 466.95 L1127.00 459.80 L1127.00 474.10 Z"/>
<path d="M1135.70 695.35 L1127.00 688.20 L1127.00 702.50 Z"/>
<path d="M1135.70 1037.95 L1127.00 1030.80 L1127.00 1045.10 Z"/>
<path d="M1135.70 1380.55 L1127.00 1373.40 L1127.00 1387.70 Z"/>
<path d="M1637.60 483.45 L1628.90 476.30 L1628.90 490.60 Z"/>
<path d="M1636.70 861.35 L1628.00 854.20 L1628.00 868.50 Z"/>
<path d="M1637.30 673.25 L1628.60 666.10 L1628.60 680.40 Z"/>
<path d="M1637.70 292.05 L1629.00 284.90 L1629.00 299.20 Z"/>
<path d="M1639.40 1051.95 L1630.70 1044.80 L1630.70 1059.10 Z"/>
<path d="M1640.00 1238.65 L1631.30 1231.50 L1631.30 1245.80 Z"/>
<path d="M1638.00 1423.85 L1629.30 1416.70 L1629.30 1431.00 Z"/>
</g></svg>
<div class="abs" style="left:957.45px;top:799.64px;width:46.0px;height:31.4px;border-radius:5.6px;background:#f27a34;color:#fdf1ea;font-size:17.2px;line-height:31.4px;text-align:center;letter-spacing:.2px">Ship</div>
<div class="abs" style="left:957.45px;top:913.84px;width:46.0px;height:31.4px;border-radius:5.6px;background:#f27a34;color:#fdf1ea;font-size:17.2px;line-height:31.4px;text-align:center;letter-spacing:.2px">Ship</div>
<div class="abs" style="left:957.45px;top:1085.14px;width:46.0px;height:31.4px;border-radius:5.6px;background:#f27a34;color:#fdf1ea;font-size:17.2px;line-height:31.4px;text-align:center;letter-spacing:.2px">Ship</div>
<div class="abs" style="left:957.45px;top:1256.44px;width:46.0px;height:31.4px;border-radius:5.6px;background:#f27a34;color:#fdf1ea;font-size:17.2px;line-height:31.4px;text-align:center;letter-spacing:.2px">Ship</div>
<div class="abs" style="left:952.10px;top:707.01px;width:56.7px;height:31.4px;border-radius:5.6px;background:#f27a34;color:#fdf1ea;font-size:17.2px;line-height:31.4px;text-align:center;letter-spacing:.2px">Order</div>
<div class="abs" style="left:952.10px;top:821.21px;width:56.7px;height:31.4px;border-radius:5.6px;background:#f27a34;color:#fdf1ea;font-size:17.2px;line-height:31.4px;text-align:center;letter-spacing:.2px">Order</div>
<div class="abs" style="left:952.10px;top:992.51px;width:56.7px;height:31.4px;border-radius:5.6px;background:#f27a34;color:#fdf1ea;font-size:17.2px;line-height:31.4px;text-align:center;letter-spacing:.2px">Order</div>
<div class="abs" style="left:952.10px;top:1163.81px;width:56.7px;height:31.4px;border-radius:5.6px;background:#f27a34;color:#fdf1ea;font-size:17.2px;line-height:31.4px;text-align:center;letter-spacing:.2px">Order</div>
<div class="t" style="left:28.6px;top:208.5px;font-size:22px;line-height:28px;height:28px;color:#06ef1f;letter-spacing:.7px">New Model</div>
<div class="abs" style="left:0;top:0;width:1999px;height:9px;background:#3c3c3c"></div>
<div class="abs" style="left:28px;top:9px;width:1971px;height:51px;background:#161616"></div>
<div class="abs" style="left:28px;top:59.7px;width:1971px;height:50.3px;background:#101010"></div>
<div class="abs" style="left:28px;top:59.7px;width:265px;height:50.3px;background:#0d0d0d;box-shadow:2px 3px 6px rgba(0,0,0,.35)"></div>
<div class="abs" style="left:986.7px;top:9px;width:244.2px;height:49.3px;background:#111111"></div>
<div class="abs" style="left:986.7px;top:9px;width:244.2px;height:2.6px;background:#3b7dd8"></div>
<svg style="left:49.6px;top:24.8px" width="18" height="20"><g class="ic" style="stroke:#7c7c7c" stroke-width="1.5"><path d="M9 1 L16.6 5.2 L16.6 14 L9 18.4 L1.4 14 L1.4 5.2 Z"/><path d="M1.4 5.2 L9 9.6 L16.6 5.2 M9 9.6 L9 18.4"/></g></svg><div class="t " style="top:23.20px;left:77.00px;font-size:19.5px;letter-spacing:0.38px;line-height:24px;height:24px;color:#868686;">Internet Sales.yml</div><svg style="left:255.2px;top:29.2px" width="13" height="13"><path class="ic" style="stroke:#5e5e5e" stroke-width="1.3" d="M.6 .6 L12.4 12.4 M12.4 .6 L.6 12.4"/></svg><svg style="left:334px;top:22px" width="26" height="27"><g class="ic" style="stroke:#7c7c7c" stroke-width="1.5"><path d="M23.2 13 L23.2 7.6 L12 1.4 L1.6 7.4 L1.6 19 L12 25 L14 23.9"/><path d="M1.6 7.4 L12 13.4 L23.2 7.6 M12 13.4 L12 25 M6.6 4.5 L17.6 10.6"/><path d="M16.5 20.2 L19 22.8 L23.8 17.4"/></g></svg><div class="t " style="top:23.20px;left:370.80px;font-size:19.8px;letter-spacing:0.5px;line-height:24px;height:24px;color:#868686;">sml-internet-sales<span class="u">_</span>main</div><svg style="left:605.4px;top:29.2px" width="13" height="13"><path class="ic" style="stroke:#5e5e5e" stroke-width="1.3" d="M.6 .6 L12.4 12.4 M12.4 .6 L.6 12.4"/></svg><svg style="left:688px;top:24px" width="24" height="30"><g class="ic" style="stroke:#7c7c7c" stroke-width="1.4"><rect x="1.4" y="1.8" width="20" height="13.4" rx="2"/><path d="M6.4 1.8 V15.2 M11.4 1.8 V15.2 M16.4 1.8 V15.2 M1.4 6.3 H21.4 M1.4 10.7 H21.4" stroke-width="1.2"/><path d="M11.4 15.2 V23.6 M2.6 23.6 H20.2" stroke-width="1.1"/><circle cx="11.4" cy="23.6" r="3" stroke-width="1.1"/></g></svg><div class="t " style="top:23.20px;left:726.00px;font-size:19.5px;letter-spacing:0.59px;line-height:24px;height:24px;color:#868686;">factinternetsales.yml</div><svg style="left:931px;top:29.2px" width="13" height="13"><path class="ic" style="stroke:#5e5e5e" stroke-width="1.3" d="M.6 .6 L12.4 12.4 M12.4 .6 L.6 12.4"/></svg><svg style="left:1008.2px;top:25.2px" width="18" height="20"><g class="ic" style="stroke:#e0e0e0" stroke-width="1.6"><path d="M9 1 L16.6 5.2 L16.6 14 L9 18.4 L1.4 14 L1.4 5.2 Z"/><path d="M1.4 5.2 L9 9.6 L16.6 5.2 M9 9.6 L9 18.4"/></g></svg><div class="t " style="top:23.30px;left:1035.20px;font-size:19.5px;letter-spacing:0.64px;line-height:24px;height:24px;color:#ececec;">New Model.yml</div><svg style="left:1192.2px;top:29.4px" width="13" height="13"><path class="ic" style="stroke:#585858" stroke-width="1.3" d="M.6 .6 L12.4 12.4 M12.4 .6 L.6 12.4"/></svg><div class="t " style="top:76.00px;left:50.20px;font-size:16px;letter-spacing:0.5px;color:#ececec;">CANVAS</div><div class="t " style="top:76.00px;left:153.60px;font-size:15.8px;letter-spacing:0.12px;color:#9c9c9c;">TEXT EDITOR</div><div class="abs" style="left:296.6px;top:71.6px;width:2.6px;height:26.4px;background:#b4b4b4;border-radius:1px"></div>
<svg style="left:336.6px;top:75.8px" width="20" height="20"><g class="ic" style="stroke:#7fa9da" stroke-width="1.2"><rect x=".8" y=".8" width="17.4" height="17.2" rx="2.6"/><path d="M6.6 9.4 H12.4 M9.5 6.5 V12.3"/></g></svg><div class="t " style="top:75.30px;left:361.60px;font-size:15px;letter-spacing:0.5px;color:#8cb9ee;">Add to Model</div></div>
</body></html>
